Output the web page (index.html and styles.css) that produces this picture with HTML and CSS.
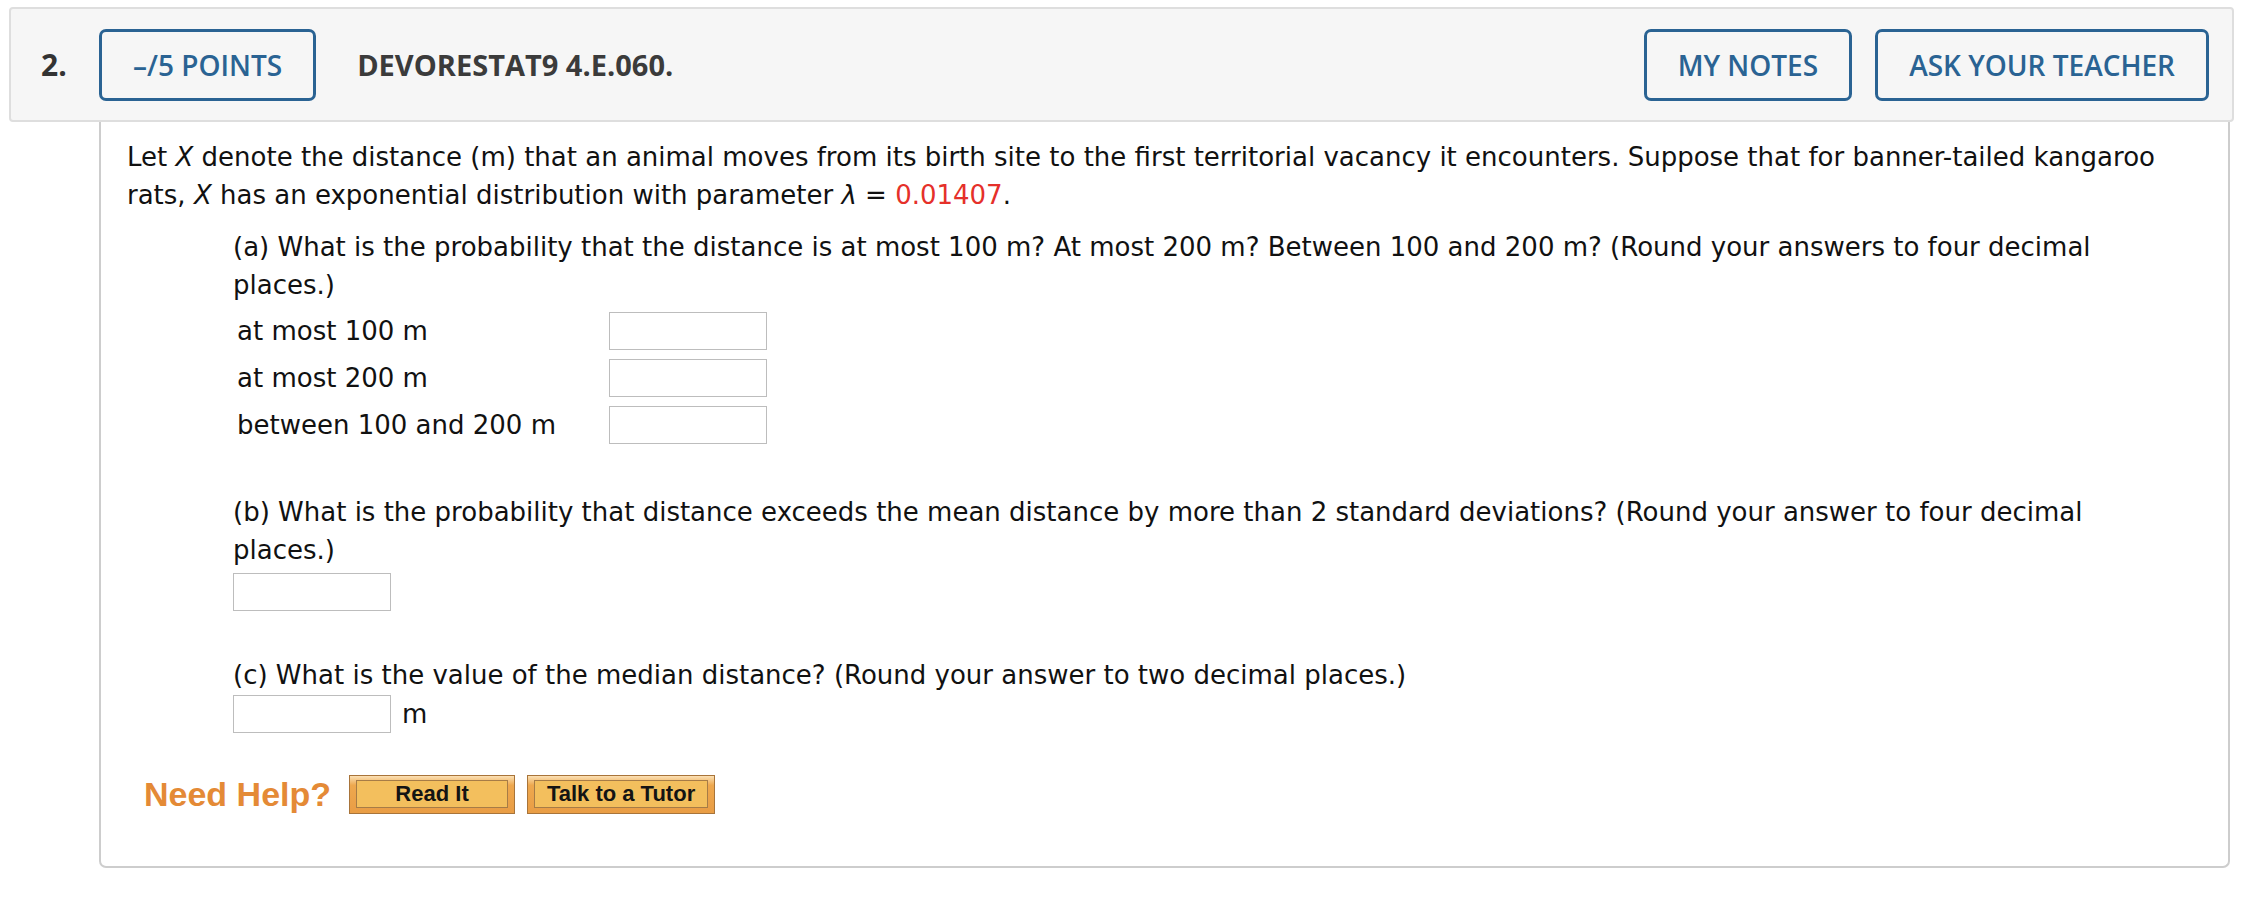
FILE: index.html
```html
<!DOCTYPE html>
<html lang="en">
<head>
<meta charset="utf-8">
<title>DEVORESTAT9 4.E.060.</title>
<link rel="stylesheet" href="styles.css">
</head>
<body>
<div class="page">
  <div class="qhead">
    <span class="qnum">2.</span>
    <span class="obtn points">&ndash;/5 POINTS</span>
    <span class="qid">DEVORESTAT9 4.E.060.</span>
    <span class="spacer"></span>
    <span class="obtn">MY NOTES</span>
    <span class="obtn">ASK YOUR TEACHER</span>
  </div>
  <div class="qbody">
    <p class="intro">Let <i>X</i> denote the distance (m) that an animal moves from its birth site to the first territorial vacancy it encounters. Suppose that for banner-tailed kangaroo rats, <i>X</i> has an exponential distribution with parameter <i>&lambda;</i> = <span class="red">0.01407</span>.</p>
    <div class="part part-a">
      <p>(a) What is the probability that the distance is at most 100 m? At most 200 m? Between 100 and 200 m? (Round your answers to four decimal places.)</p>
      <div class="answers">
        <span class="lbl">at most 100 m</span><span class="box"></span>
        <span class="lbl">at most 200 m</span><span class="box"></span>
        <span class="lbl">between 100 and 200 m</span><span class="box"></span>
      </div>
    </div>
    <div class="part part-b">
      <p>(b) What is the probability that distance exceeds the mean distance by more than 2 standard deviations? (Round your answer to four decimal places.)</p>
      <div class="ansrow first"><span class="box"></span></div>
    </div>
    <div class="part part-c">
      <p>(c) What is the value of the median distance? (Round your answer to two decimal places.)</p>
      <div class="ansrow"><span class="box"></span><span class="unit">m</span></div>
    </div>
    <div class="help">
      <span class="needhelp">Need Help?</span>
      <span class="tbtn read"><span class="tin">Read It</span></span>
      <span class="tbtn tutor"><span class="tin">Talk to a Tutor</span></span>
    </div>
  </div>
</div>
</body>
</html>
```

FILE: styles.css
```css
html, body {
  margin: 0;
  padding: 0;
  background: #ffffff;
}

.page {
  padding: 7px 8px 0 9px;
}

.qhead {
  display: flex;
  align-items: center;
  height: 111px;
  background: #f6f6f6;
  border: 2px solid #dedede;
  border-radius: 4px;
  padding: 0 23px 0 30px;
  font-family: "Open Sans", "DejaVu Sans", sans-serif;
}

.qnum {
  font-weight: 700;
  font-size: 30px;
  color: #333333;
  width: 58px;
}

.obtn {
  display: inline-flex;
  align-items: center;
  justify-content: center;
  box-sizing: border-box;
  height: 72px;
  padding: 0 31px;
  border: 3px solid #2a6393;
  border-radius: 7px;
  color: #2a6393;
  font-size: 28px;
  font-weight: 600;
  background: #f6f6f6;
  white-space: nowrap;
}

.obtn + .obtn {
  margin-left: 23px;
}

.qid {
  margin-left: 41px;
  font-size: 29px;
  font-weight: 700;
  color: #3b3b3b;
}

.spacer {
  flex: 1;
}

.qbody {
  margin: 0 4px 0 90px;
  border: 2px solid #cdcdcd;
  border-top: none;
  border-radius: 0 0 7px 7px;
  padding: 16px 40px 52px 26px;
  font-family: "DejaVu Sans", Verdana, sans-serif;
  font-size: 26px;
  line-height: 38px;
  color: #111111;
}

.qbody p {
  margin: 0;
}

.red {
  color: #e5302a;
}

.part {
  margin-left: 106px;
}

.part-a {
  margin-top: 14px;
}

.part-b,
.part-c {
  margin-top: 45px;
}

.answers {
  display: grid;
  grid-template-columns: 376px 158px;
  grid-auto-rows: 47px;
  align-items: center;
  margin-top: 3px;
}

.lbl {
  padding-left: 4px;
}

.box {
  display: block;
  box-sizing: border-box;
  width: 158px;
  height: 38px;
  border: 1px solid #bdbdbd;
  background: #ffffff;
}

.ansrow {
  display: flex;
  align-items: center;
  margin-top: 1px;
}

.ansrow.first {
  margin-top: 4px;
}

.unit {
  margin-left: 11px;
}

.help {
  display: flex;
  align-items: center;
  margin-top: 42px;
  margin-left: 17px;
}

.needhelp {
  font-family: "Liberation Sans", Arial, sans-serif;
  font-weight: 700;
  font-size: 34px;
  line-height: 39px;
  color: #e48a36;
  margin-right: 18px;
}

.tbtn {
  display: inline-flex;
  box-sizing: border-box;
  height: 39px;
  padding: 4px 6px 5px 6px;
  border: 1px solid #a8743a;
  background: linear-gradient(#fbe0b4 0%, #eea84e 25%, #e99d45 100%);
}

.tbtn.read {
  width: 166px;
}

.tbtn.tutor {
  width: 188px;
  margin-left: 12px;
}

.tin {
  flex: 1;
  display: flex;
  align-items: center;
  justify-content: center;
  border: 1px solid #a77c46;
  background: #f3bf5d;
  font-family: "Liberation Sans", Arial, sans-serif;
  font-weight: 700;
  font-size: 22px;
  line-height: 1;
  color: #141414;
  white-space: nowrap;
}
```
